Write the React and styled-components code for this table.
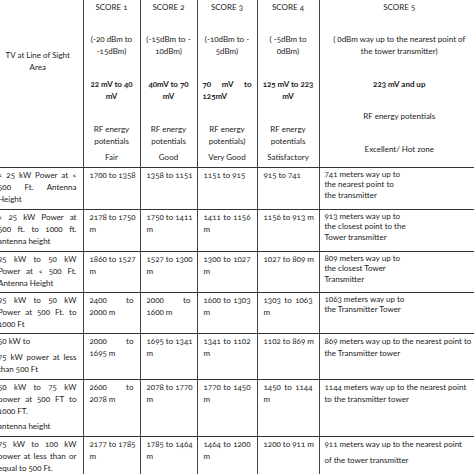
import React from "react";
import styled, { createGlobalStyle } from "styled-components";

const Global = createGlobalStyle`
  html, body { margin: 0; padding: 0; background: #fff; overflow: hidden; }
  body { font-family: Lato, "Open Sans", sans-serif; color: #222; }
`;

const Table = styled.table`
  margin-left: -7px;
  width: 486px;
  table-layout: fixed;
  border-collapse: collapse;
  font-size: 8px;
  font-variant-numeric: oldstyle-nums;
`;

const Col = styled.col`
  width: ${(p) => p.$w}px;
`;

const HeadCell = styled.th`
  box-sizing: border-box;
  height: 167px;
  vertical-align: top;
  text-align: center;
  font-weight: normal;
  padding: ${(p) => p.$pt || 1}px 5px 0 5px;
  line-height: 12px;
  border-left: 1px solid #444;
  border-bottom: 1px solid #333;
  &:first-child { border-left: none; }
`;

const Cell = styled.td`
  box-sizing: border-box;
  height: ${(p) => p.$h}px;
  vertical-align: top;
  text-align: left;
  padding: 1px ${(p) => (p.$wide ? 4 : 6)}px 0 ${(p) => (p.$first ? 5 : p.$wide ? 5 : 6)}px;
  line-height: ${(p) => p.$lh || 12}px;
  border-left: 1px solid #444;
  border-bottom: 1px solid #333;
  white-space: nowrap;
  &:first-child { border-left: none; }
`;

const Para = styled.div`
  margin-top: ${(p) => p.$mt || 0}px;
  font-weight: ${(p) => (p.$bold ? 700 : 400)};
`;

const Line = styled.span`
  display: block;
  text-align: ${(p) => (p.$j ? "justify" : "inherit")};
  text-align-last: ${(p) => (p.$j ? "justify" : "auto")};
  margin-top: ${(p) => p.$mt || 0}px;
`;

const L = ({ children }) => {
  const arr = Array.isArray(children) ? children : [children];
  return arr.map((t, i) => {
    if (typeof t === "string") return <Line key={i}>{t}</Line>;
    return React.cloneElement(t, { key: i });
  });
};

const J = (t, mt) => <Line $j $mt={mt}>{t}</Line>;
const N = (t, mt) => <Line $mt={mt}>{t}</Line>;

const scores = [
  { s: "SCORE 1", d: ["(-20 dBm to", "-15dBm)"], mv: [N("22 mV to 40"), N("mV")], rf: ["RF energy", "potentials"], q: "Fair" },
  { s: "SCORE 2", d: ["(-15dBm to -", "10dBm)"], mv: [N("40mV to 70"), N("mV")], rf: ["RF energy", "potentials"], q: "Good" },
  { s: "SCORE 3", d: ["(-10dBm to -", "5dBm)"], mv: [J("70 mV to"), <Line style={{ textAlign: "left" }}>125mV</Line>], rf: ["RF energy", "potentials)"], q: "Very Good" },
  { s: "SCORE 4", d: ["( -5dBm to", "0dBm)"], mv: [N("125 mV to 223"), N("mV")], rf: ["RF energy", "potentials"], q: "Satisfactory" },
];

const rows = [
  {
    h: 42, lh: 10.5,
    c: [
      [J("< 25 kW Power at <"), J("500 Ft. Antenna"), N("Height")],
      [N("1700 to 1358")], [N("1358 to 1151")], [N("1151 to 915")], [N("915 to 741")],
      [N("741 meters way up to"), N("the nearest point to"), N("the transmitter")],
    ],
  },
  {
    h: 42, lh: 10.5,
    c: [
      [J("<  25 kW Power at"), J("500 ft. to 1000 ft."), N("antenna height")],
      [J("2178 to 1750"), N("m")], [J("1750 to 1411"), N("m")], [J("1411 to 1156"), N("m")], [N("1156 to 913 m")],
      [N("913  meters way up to"), N("the closest point to the"), N("Tower transmitter")],
    ],
  },
  {
    h: 41, lh: 10.5,
    c: [
      [J("25 kW to 50 kW"), J("Power at < 500 Ft."), N("Antenna Height")],
      [J("1860 to 1527"), N("m")], [J("1527 to 1300"), N("m")], [J("1300 to 1027"), N("m")], [N("1027 to 809 m")],
      [N("809 meters way up to"), N("the closest Tower"), N("Transmitter")],
    ],
  },
  {
    h: 41, lh: 10.5,
    c: [
      [J("25 kW to 50 kW"), J("Power at 500 Ft. to"), N("1000 Ft")],
      [J("2400 to"), N("2000 m")], [J("2000 to"), N("1600 m")], [J("1600 to 1303"), N("m")], [J("1303 to 1063"), N("m")],
      [N("1063 meters way up to"), N("the Transmitter Tower")],
    ],
  },
  {
    h: 46,
    c: [
      [N("50 kW to"), J("75 kW power at less", 4), N("than 500 Ft")],
      [J("2000 to"), N("1695 m")], [J("1695 to 1341"), N("m")], [J("1341 to 1102"), N("m")], [N("1102 to 869 m")],
      [N("869 meters way up to the nearest point to"), N("the Transmitter tower")],
    ],
  },
  {
    h: 57,
    c: [
      [J("50 kW to 75 kW"), J("power at 500 FT to"), N("1000 FT."), N("antenna height", 3)],
      [J("2600 to"), N("2078 m")], [J("2078 to 1770"), N("m")], [J("1770 to 1450"), N("m")], [J("1450 to 1144"), N("m")],
      [N("1144 meters way up to the nearest point"), N("to the transmitter tower")],
    ],
  },
  {
    h: 45,
    c: [
      [J("75 kW to 100 kW"), J("power at less than or"), N("equal to 500 Ft.")],
      [J("2177 to 1785"), N("m")], [J("1785 to 1464"), N("m")], [J("1464 to 1200"), N("m")], [N("1200 to 911 m")],
      [N("911 meters way up to the nearest point"), N("of the tower transmitter", 4)],
    ],
  },
];

const widths = [90, 57, 57, 60, 62, 160];

export default function App() {
  return (
    <>
      <Global />
      <Table>
        <colgroup>
          {widths.map((w, i) => (
            <Col key={i} $w={w} />
          ))}
        </colgroup>
        <thead>
          <tr>
            <HeadCell $pt={49}>
              <Para>TV at Line of Sight</Para>
              <Para>Area</Para>
            </HeadCell>
            {scores.map((s) => (
              <HeadCell key={s.s}>
                <Para>{s.s}</Para>
                <Para $mt={20}>
                  <L>{s.d}</L>
                </Para>
                <Para $mt={21} $bold>
                  <L>{s.mv}</L>
                </Para>
                <Para $mt={21}>
                  <L>{s.rf}</L>
                </Para>
                <Para $mt={4}>{s.q}</Para>
              </HeadCell>
            ))}
            <HeadCell>
              <Para>SCORE 5</Para>
              <Para $mt={20}>
                <L>{["( 0dBm way up to the nearest point of", "the tower transmitter)"]}</L>
              </Para>
              <Para $mt={21} $bold>223 mV and up</Para>
              <Para $mt={20}>RF energy potentials</Para>
              <Para $mt={21}>Excellent/ Hot zone</Para>
            </HeadCell>
          </tr>
        </thead>
        <tbody>
          {rows.map((r, ri) => (
            <tr key={ri}>
              {r.c.map((c, ci) => (
                <Cell
                  key={ci}
                  $h={r.h}
                  $first={ci === 0}
                  $wide={ci === 5}
                  $lh={ci === 5 ? r.lh : 12}
                >
                  <L>{c}</L>
                </Cell>
              ))}
            </tr>
          ))}
        </tbody>
      </Table>
    </>
  );
}
